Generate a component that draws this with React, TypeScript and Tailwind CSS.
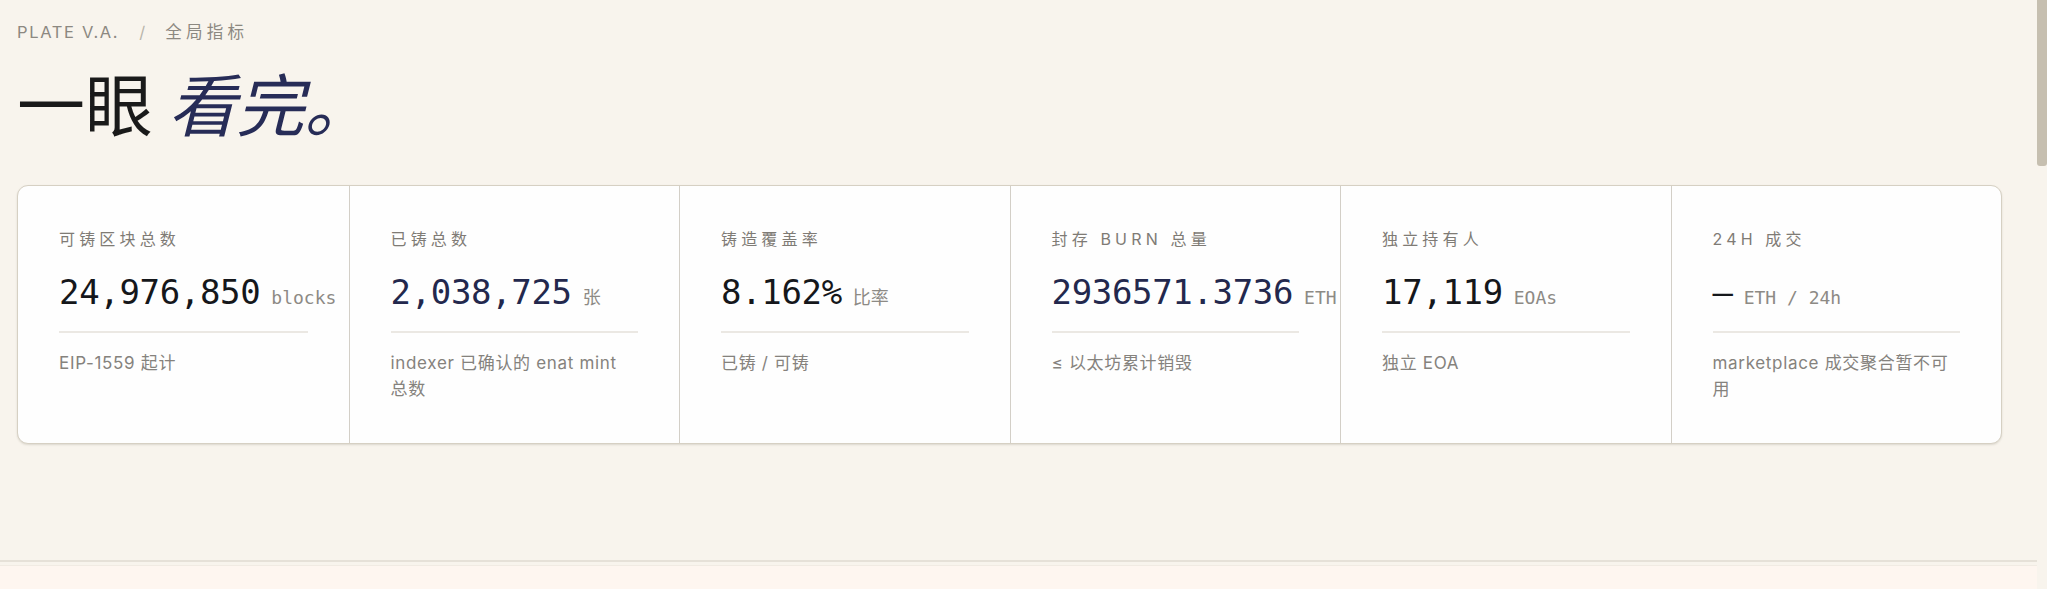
const mono = "font-['DejaVu_Sans_Mono','Liberation_Mono',monospace]";

type Stat = {
  label: string;
  value: string;
  unit: string;
  note: string;
  accent?: boolean;
};

const stats: Stat[] = [
  { label: "可铸区块总数", value: "24,976,850", unit: "blocks", note: "EIP-1559 起计" },
  { label: "已铸总数", value: "2,038,725", unit: "张", note: "indexer 已确认的 enat mint 总数", accent: true },
  { label: "铸造覆盖率", value: "8.162%", unit: "比率", note: "已铸 / 可铸" },
  { label: "封存 BURN 总量", value: "2936571.3736", unit: "ETH", note: "≤ 以太坊累计销毁", accent: true },
  { label: "独立持有人", value: "17,119", unit: "EOAs", note: "独立 EOA" },
  { label: "24H 成交", value: "—", unit: "ETH / 24h", note: "marketplace 成交聚合暂不可用" },
];

function StatCell({ stat, first }: { stat: Stat; first: boolean }) {
  return (
    <div className={`flex min-w-0 flex-col px-[41px] pt-[40px] pb-[41px] ${first ? "" : "border-l border-[#d3cfc7]"}`}>
      <div className="text-[16px] leading-[26px] tracking-[0.26em] text-[#7f7b75] font-['Inter','Noto_Sans_CJK_SC',sans-serif]">
        {stat.label}
      </div>
      <div className="mt-[20px] flex items-baseline gap-[11px] whitespace-nowrap">
        <span className={`${mono} text-[34px] leading-[40px] tracking-[-0.01em] ${stat.accent ? "text-[#23284d]" : "text-[#15171b]"}`}>
          {stat.value}
        </span>
        <span className="text-[18px] leading-[24px] text-[#8d8a85] font-['DejaVu_Sans_Mono','Noto_Sans_CJK_SC',monospace]">
          {stat.unit}
        </span>
      </div>
      <div className="mt-[19px] h-[2px] bg-[#ebe8e3]" />
      <div className="mt-[17px] text-[17px] leading-[26px] tracking-[0.04em] text-[#85827d] font-['Inter','Noto_Sans_CJK_SC',sans-serif]">
        {stat.note}
      </div>
    </div>
  );
}

export default function App() {
  return (
    <div className="flex h-[589px] w-full overflow-hidden bg-[#f8f4ed]">
      <div className="flex min-w-0 flex-1 flex-col">
        <section className="border-b-2 border-[#e6e1d8] pl-[17px] pr-[35px] pt-[20px] pb-[116px]">
          {/* Breadcrumb */}
          <div className="flex items-center gap-[20px] text-[16.5px] leading-[24px] text-[#8c8881] font-['Inter','Noto_Sans_CJK_SC',sans-serif]">
            <span className="tracking-[0.1em]">PLATE V.A.</span>
            <span className="text-[#b9b4ab]">/</span>
            <span className="tracking-[0.26em]">全局指标</span>
          </div>

          {/* Title */}
          <h1 className="mt-[24px] text-[68px] font-normal leading-none text-[#1a1a1a] font-['Noto_Sans_CJK_SC',sans-serif]">
            一眼 <em className="italic text-[#272c57]">看完。</em>
          </h1>

          {/* Stats card */}
          <div className="mt-[49px] grid grid-cols-6 overflow-hidden rounded-[11px] border border-[#d6d0c3] bg-[#fefefe] shadow-[0_1px_2px_rgba(70,60,40,0.15)]">
            {stats.map((s, i) => (
              <StatCell key={s.label} stat={s} first={i === 0} />
            ))}
          </div>
        </section>
        <div className="mt-[3px] flex-1 border-t border-[#f1ebe3] bg-[#fef6f0]" />
      </div>
      {/* scroll thumb */}
      <div className="w-[10px] shrink-0">
        <div className="h-[166px] rounded-b-[3px] bg-[#c6bfb0]" />
      </div>
    </div>
  );
}
